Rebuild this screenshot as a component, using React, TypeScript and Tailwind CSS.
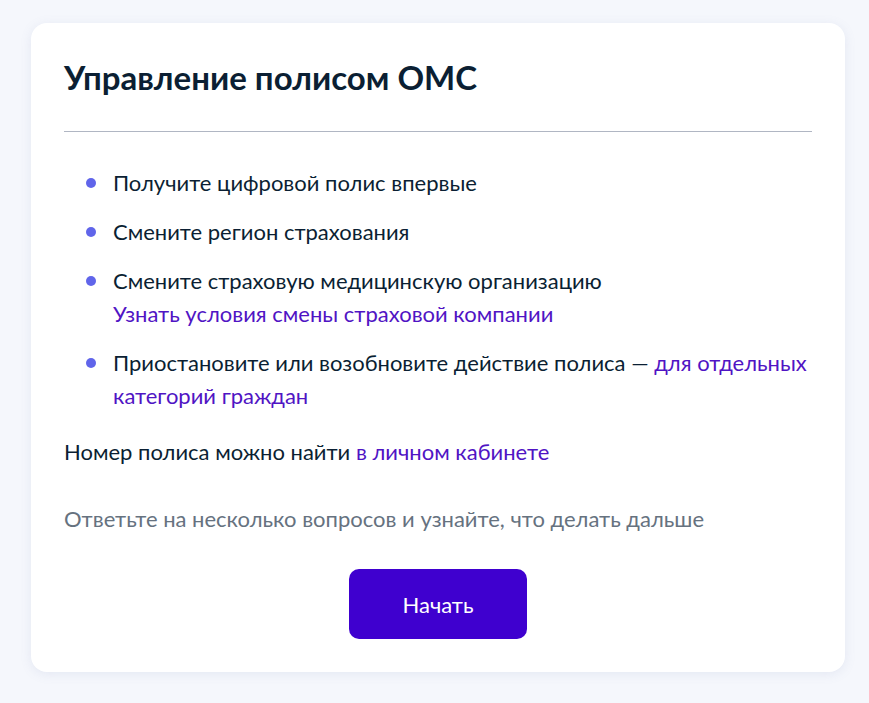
export default function App() {
  const items = [
    { text: "Получите цифровой полис впервые" },
    { text: "Смените регион страхования" },
    {
      text: "Смените страховую медицинскую организацию",
      sub: "Узнать условия смены страховой компании",
    },
    {
      text: "Приостановите или возобновите действие полиса — ",
      link: "для отдельных категорий граждан",
    },
  ];

  return (
    <div className="min-h-[703px] w-[869px] bg-[#f5f7fc] pt-[23px] font-['Lato',sans-serif] text-[#0b1f33]">
      <div className="ml-[31px] w-[814px] rounded-[16px] bg-white px-[33px] pt-[34px] pb-[33px] shadow-[0_2px_12px_rgba(110,120,170,0.12)]">
        <h1 className="text-[33px] leading-[40px] font-bold">Управление полисом ОМС</h1>

        <div className="mt-[34px] h-px bg-[#b0b6c3]" />

        <ul className="mt-[34px] flex flex-col gap-[16px] pl-[22px] text-[22px] leading-[33px]">
          {items.map((item, i) => (
            <li key={i} className="flex gap-[17px]">
              <span className="mt-[12px] h-[10px] w-[10px] shrink-0 rounded-full bg-[#6065ea]" />
              <div>
                {item.text}
                {item.link && <span className="text-[#5014c4]">{item.link}</span>}
                {item.sub && <div className="text-[#5014c4]">{item.sub}</div>}
              </div>
            </li>
          ))}
        </ul>

        <p className="mt-[23px] text-[22px] leading-[33px]">
          Номер полиса можно найти <span className="text-[#5014c4]">в личном кабинете</span>
        </p>

        <p className="mt-[34px] text-[22px] leading-[33px] text-[#66727f]">
          Ответьте на несколько вопросов и узнайте, что делать дальше
        </p>

        <div className="mt-[34px] flex justify-center">
          <button className="h-[70px] w-[178px] rounded-[10px] bg-[#3f00cf] text-[22px] text-white">
            Начать
          </button>
        </div>
      </div>
    </div>
  );
}
